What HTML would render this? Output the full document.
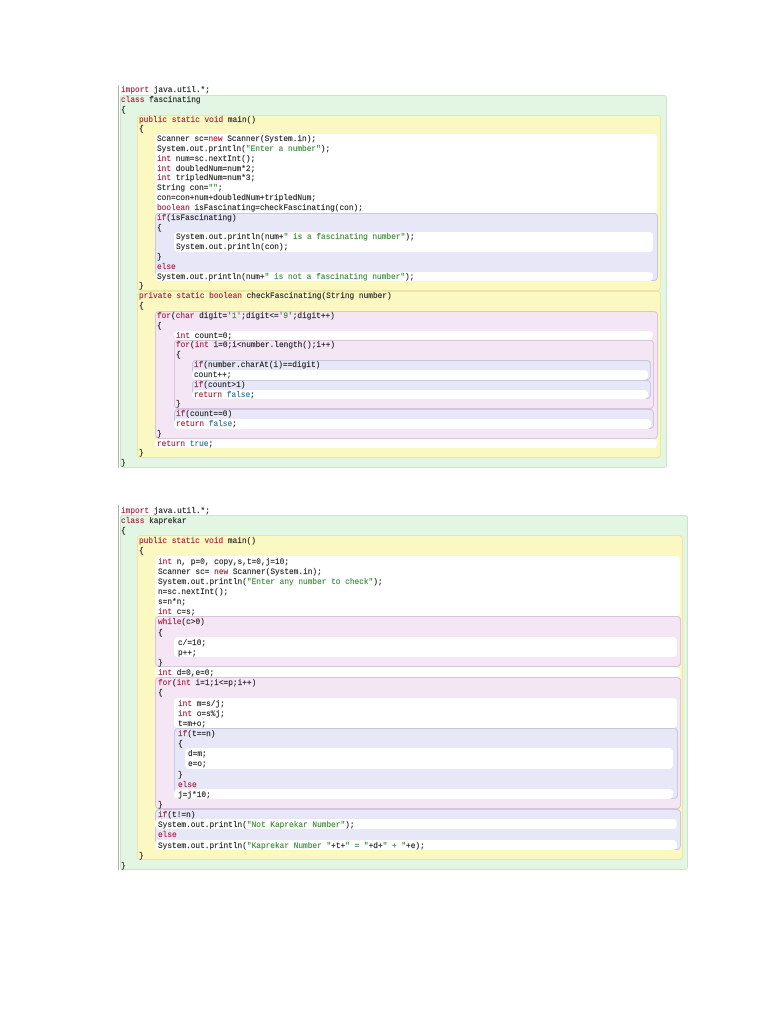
<!DOCTYPE html>
<html><head><meta charset="utf-8">
<style>
html,body{margin:0;padding:0;background:#fff;}
body{width:768px;height:1024px;position:relative;overflow:hidden;font-family:"Liberation Mono","DejaVu Sans Mono",monospace;font-size:7.8px;color:#1e1e1e;}
.blk{position:absolute;left:0;top:0;width:768px;height:1024px;}
.b{position:absolute;top:calc(var(--y0) + var(--i) * var(--lh) - var(--lh) / 2);height:calc(var(--n) * var(--lh));border-radius:4px;box-sizing:border-box;}
.g{background:#e3f6e3;border:1px solid #c9e6c9;border-radius:3px;}
.y{background:#fbf8c2;border:1px solid #ece6a0;}
.p{background:#f5e6f5;border:1px solid #d9c4dc;}
.v{background:#e7e7f7;border:1px solid #c8c8e0;}
.w{background:#fff;}
.l{position:absolute;top:calc(var(--y0) + var(--i) * var(--lh) - var(--lh) / 2 + 2px);height:var(--lh);line-height:var(--lh);white-space:pre;-webkit-text-stroke:0.15px currentColor;}
.k{color:#a31f3c;}
.s{color:#3b8a3b;}
.t{color:#2a78a0;}
.vl{position:absolute;left:118px;width:1px;background:#b0b0b0;}
</style></head><body>

<div class="blk" style="--y0:90px;--lh:9.82px;">
<div class="vl" style="top:85px;height:383px;"></div>
<div class="b g" style="--i:1;--n:38;left:120px;width:547px;"></div>
<div class="b y" style="--i:3;--n:18;left:137px;width:524px;"></div>
<div class="b w" style="--i:5;--n:8;left:155px;width:502px;"></div>
<div class="b v" style="--i:13;--n:7;left:155px;width:503px;"></div>
<div class="b w" style="--i:15;--n:2;left:174px;width:479px;"></div>
<div class="b w" style="--i:19;--n:1;left:155px;width:498px;"></div>
<div class="b y" style="--i:21;--n:17;left:137px;width:524px;"></div>
<div class="b p" style="--i:23;--n:13;left:155px;width:503px;"></div>
<div class="b w" style="--i:25;--n:1;left:174px;width:479px;"></div>
<div class="b p" style="--i:26;--n:7;left:174px;width:480px;"></div>
<div class="b v" style="--i:28;--n:2;left:192px;width:459px;"></div>
<div class="b w" style="--i:29;--n:1;left:192px;width:456px;"></div>
<div class="b v" style="--i:30;--n:2;left:192px;width:459px;"></div>
<div class="b w" style="--i:31;--n:1;left:192px;width:456px;"></div>
<div class="b v" style="--i:33;--n:2;left:174px;width:480px;"></div>
<div class="b w" style="--i:34;--n:1;left:174px;width:477px;"></div>
<div class="b w" style="--i:36;--n:1;left:155px;width:502px;"></div>

<div class="l" style="--i:0;left:121px"><span class="k">import</span> java.util.*;</div>
<div class="l" style="--i:1;left:121px"><span class="k">class</span> fascinating</div>
<div class="l" style="--i:2;left:121px">{</div>
<div class="l" style="--i:3;left:139px"><span class="k">public static void</span> main()</div>
<div class="l" style="--i:4;left:139px">{</div>
<div class="l" style="--i:5;left:157px">Scanner sc=<span class="k">new</span> Scanner(System.in);</div>
<div class="l" style="--i:6;left:157px">System.out.println(<span class="s">"Enter a number"</span>);</div>
<div class="l" style="--i:7;left:157px"><span class="k">int</span> num=sc.nextInt();</div>
<div class="l" style="--i:8;left:157px"><span class="k">int</span> doubledNum=num*2;</div>
<div class="l" style="--i:9;left:157px"><span class="k">int</span> tripledNum=num*3;</div>
<div class="l" style="--i:10;left:157px">String con=<span class="s">""</span>;</div>
<div class="l" style="--i:11;left:157px">con=con+num+doubledNum+tripledNum;</div>
<div class="l" style="--i:12;left:157px"><span class="k">boolean</span> isFascinating=checkFascinating(con);</div>
<div class="l" style="--i:13;left:157px"><span class="k">if</span>(isFascinating)</div>
<div class="l" style="--i:14;left:157px">{</div>
<div class="l" style="--i:15;left:176px">System.out.println(num+<span class="s">" is a fascinating number"</span>);</div>
<div class="l" style="--i:16;left:176px">System.out.println(con);</div>
<div class="l" style="--i:17;left:157px">}</div>
<div class="l" style="--i:18;left:157px"><span class="k">else</span></div>
<div class="l" style="--i:19;left:157px">System.out.println(num+<span class="s">" is not a fascinating number"</span>);</div>
<div class="l" style="--i:20;left:139px">}</div>
<div class="l" style="--i:21;left:139px"><span class="k">private static boolean</span> checkFascinating(String number)</div>
<div class="l" style="--i:22;left:139px">{</div>
<div class="l" style="--i:23;left:157px"><span class="k">for</span>(<span class="k">char</span> digit=<span class="s">'1'</span>;digit&lt;=<span class="s">'9'</span>;digit++)</div>
<div class="l" style="--i:24;left:157px">{</div>
<div class="l" style="--i:25;left:176px"><span class="k">int</span> count=0;</div>
<div class="l" style="--i:26;left:176px"><span class="k">for</span>(<span class="k">int</span> i=0;i&lt;number.length();i++)</div>
<div class="l" style="--i:27;left:176px">{</div>
<div class="l" style="--i:28;left:194px"><span class="k">if</span>(number.charAt(i)==digit)</div>
<div class="l" style="--i:29;left:194px">count++;</div>
<div class="l" style="--i:30;left:194px"><span class="k">if</span>(count&gt;1)</div>
<div class="l" style="--i:31;left:194px"><span class="k">return</span> <span class="t">false</span>;</div>
<div class="l" style="--i:32;left:176px">}</div>
<div class="l" style="--i:33;left:176px"><span class="k">if</span>(count==0)</div>
<div class="l" style="--i:34;left:176px"><span class="k">return</span> <span class="t">false</span>;</div>
<div class="l" style="--i:35;left:157px">}</div>
<div class="l" style="--i:36;left:157px"><span class="k">return</span> <span class="t">true</span>;</div>
<div class="l" style="--i:37;left:139px">}</div>
<div class="l" style="--i:38;left:121px">}</div>
</div>

<div class="blk" style="--y0:510px;--lh:10.14px;">
<div class="vl" style="top:505px;height:365px;"></div>
<div class="b g" style="--i:1;--n:35;left:120px;width:568px;"></div>
<div class="b y" style="--i:3;--n:32;left:137px;width:546px;"></div>
<div class="b w" style="--i:5;--n:6;left:155px;width:525px;"></div>
<div class="b p" style="--i:11;--n:5;left:155px;width:526px;"></div>
<div class="b w" style="--i:13;--n:2;left:174px;width:503px;"></div>
<div class="b w" style="--i:16;--n:1;left:155px;width:525px;"></div>
<div class="b p" style="--i:17;--n:13;left:155px;width:526px;"></div>
<div class="b w" style="--i:19;--n:3;left:174px;width:503px;"></div>
<div class="b v" style="--i:22;--n:7;left:174px;width:504px;"></div>
<div class="b w" style="--i:24;--n:2;left:185px;width:488px;"></div>
<div class="b w" style="--i:28;--n:1;left:174px;width:499px;"></div>
<div class="b v" style="--i:30;--n:4;left:155px;width:526px;"></div>
<div class="b w" style="--i:31;--n:1;left:155px;width:522px;"></div>
<div class="b w" style="--i:33;--n:1;left:155px;width:522px;"></div>

<div class="l" style="--i:0;left:121px"><span class="k">import</span> java.util.*;</div>
<div class="l" style="--i:1;left:121px"><span class="k">class</span> kaprekar</div>
<div class="l" style="--i:2;left:121px">{</div>
<div class="l" style="--i:3;left:139px"><span class="k">public static void</span> main()</div>
<div class="l" style="--i:4;left:139px">{</div>
<div class="l" style="--i:5;left:158px"><span class="k">int</span> n, p=0, copy,s,t=0,j=10;</div>
<div class="l" style="--i:6;left:158px">Scanner sc= <span class="k">new</span> Scanner(System.in);</div>
<div class="l" style="--i:7;left:158px">System.out.println(<span class="s">"Enter any number to check"</span>);</div>
<div class="l" style="--i:8;left:158px">n=sc.nextInt();</div>
<div class="l" style="--i:9;left:158px">s=n*n;</div>
<div class="l" style="--i:10;left:158px"><span class="k">int</span> c=s;</div>
<div class="l" style="--i:11;left:158px"><span class="k">while</span>(c&gt;0)</div>
<div class="l" style="--i:12;left:158px">{</div>
<div class="l" style="--i:13;left:178px">c/=10;</div>
<div class="l" style="--i:14;left:178px">p++;</div>
<div class="l" style="--i:15;left:158px">}</div>
<div class="l" style="--i:16;left:158px"><span class="k">int</span> d=0,e=0;</div>
<div class="l" style="--i:17;left:158px"><span class="k">for</span>(<span class="k">int</span> i=1;i&lt;=p;i++)</div>
<div class="l" style="--i:18;left:158px">{</div>
<div class="l" style="--i:19;left:178px"><span class="k">int</span> m=s/j;</div>
<div class="l" style="--i:20;left:178px"><span class="k">int</span> o=s%j;</div>
<div class="l" style="--i:21;left:178px">t=m+o;</div>
<div class="l" style="--i:22;left:178px"><span class="k">if</span>(t==n)</div>
<div class="l" style="--i:23;left:178px">{</div>
<div class="l" style="--i:24;left:188px">d=m;</div>
<div class="l" style="--i:25;left:188px">e=o;</div>
<div class="l" style="--i:26;left:178px">}</div>
<div class="l" style="--i:27;left:178px"><span class="k">else</span></div>
<div class="l" style="--i:28;left:178px">j=j*10;</div>
<div class="l" style="--i:29;left:158px">}</div>
<div class="l" style="--i:30;left:158px"><span class="k">if</span>(t!=n)</div>
<div class="l" style="--i:31;left:158px">System.out.println(<span class="s">"Not Kaprekar Number"</span>);</div>
<div class="l" style="--i:32;left:158px"><span class="k">else</span></div>
<div class="l" style="--i:33;left:158px">System.out.println(<span class="s">"Kaprekar Number "</span>+t+<span class="s">" = "</span>+d+<span class="s">" + "</span>+e);</div>
<div class="l" style="--i:34;left:139px">}</div>
<div class="l" style="--i:35;left:121px">}</div>
</div>

</body></html>
